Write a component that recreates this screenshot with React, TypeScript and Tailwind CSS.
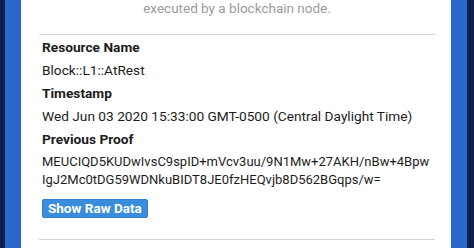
import React from "react";

export default function App() {
  return (
    <div className="w-[474px] h-[248px] overflow-hidden flex bg-[#0c2254]" style={{ fontFamily: 'Roboto, "Liberation Sans", Arial, sans-serif' }}>
      <div className="w-[5px] shrink-0 bg-[#0b1f4c]" />
      <div className="flex-1 flex bg-[#2a67cc] px-[16px]">
        <div className="flex-1 bg-white pl-[18px] pr-[16px] flex flex-col">
          <div className="h-[35px] shrink-0 border-b border-[#d4d4d4] flex justify-center">
            <p className="text-[13.5px] leading-[18px] text-[#9b9b9b] mt-[-1px]">executed by a blockchain node.</p>
          </div>
          <div className="shrink-0 pl-[3px] pt-[3px] flex flex-col gap-[5px] text-[13.7px] leading-[18px] text-[#1c1c1c]">
            <div className="font-bold">Resource Name</div>
            <div>Block::L1::AtRest</div>
            <div className="font-bold">Timestamp</div>
            <div className="whitespace-nowrap">Wed Jun 03 2020 15:33:00 GMT-0500 (Central Daylight Time)</div>
            <div className="font-bold">Previous Proof</div>
            <div className="whitespace-nowrap text-[13px]">
              MEUCIQD5KUDwIvsC9spID+mVcv3uu/9N1Mw+27AKH/nBw+4Bpw
              <br />
              IgJ2Mc0tDG59WDNkuBIDT8JE0fzHEQvjb8D562BGqps/w=
            </div>
            <div className="mt-[5px]">
              <button className="bg-[#3a8ddc] text-white font-bold text-[13.5px] leading-[17px] h-[19px] px-[5px] rounded-[2px] border border-[#3080d0]">
                Show Raw Data
              </button>
            </div>
          </div>
          <div className="shrink-0 mt-[21px] border-b border-[#d4d4d4]" />
        </div>
      </div>
      <div className="w-[7px] shrink-0 bg-[#0b1f4c]" />
    </div>
  );
}
